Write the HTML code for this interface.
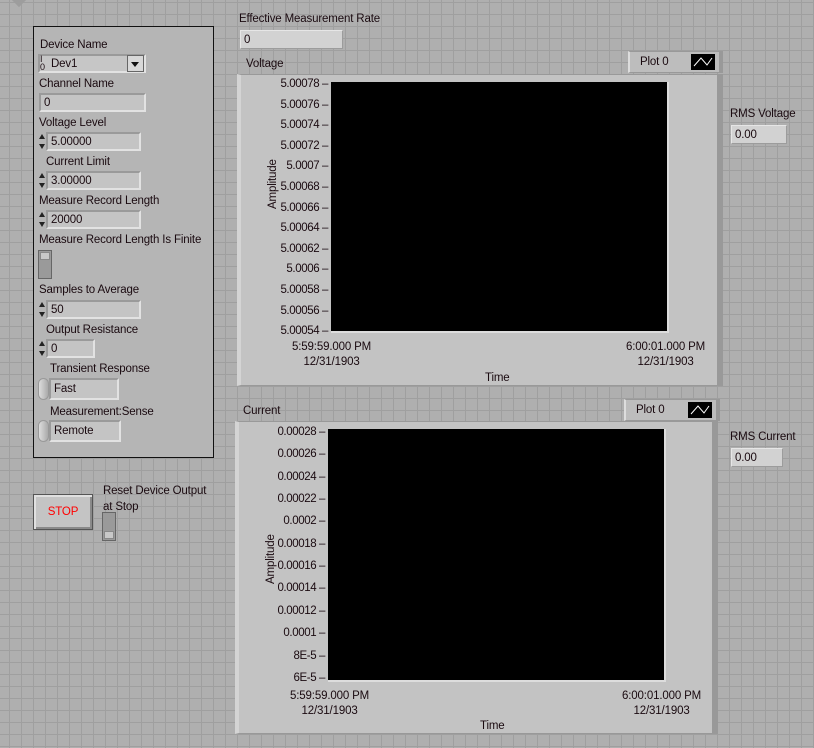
<!DOCTYPE html>
<html><head><style>
*{margin:0;padding:0;box-sizing:border-box}
body{width:814px;height:748px;overflow:hidden;position:relative;font-family:"Liberation Sans",sans-serif;font-size:11.5px;letter-spacing:-0.15px;color:#1a0a10;
background-color:#afafaf;
background-image:linear-gradient(to right,#9f9f9f 1px,transparent 1px),linear-gradient(to bottom,#9f9f9f 1px,transparent 1px);
background-size:12px 12px;background-position:9px 2px;}
.a{position:absolute;white-space:nowrap;margin-top:1px}
.panel{position:absolute;left:33px;top:26px;width:181px;height:432px;background:#b5b5b5;border:1px solid #111}
.num{position:absolute;height:19px;background:#c4c4c4;border:2px solid;border-color:#9a9a9a #e2e2e2 #e2e2e2 #9a9a9a;padding:1px 3px;line-height:14px}
.ind{position:absolute;height:19px;background:#d2d2d2;border:1px solid;border-color:#e6e6e6 #9c9c9c #9c9c9c #e6e6e6;padding:2px 3px;line-height:14px}
.spin{position:absolute;width:7px;height:19px}
.spin:before{content:"";position:absolute;left:1px;top:2px;border:3px solid transparent;border-bottom:5px solid #222;border-top:0}
.spin:after{content:"";position:absolute;left:1px;bottom:2px;border:3px solid transparent;border-top:5px solid #222;border-bottom:0}
.ring{position:absolute;width:11px;height:22px;border-radius:6px;background:linear-gradient(to right,#ddd,#aaa);border:1px solid #999}
.graph{position:absolute;background:#c3c3c3;border:1px solid #999;border-right:6px solid #999;border-left:4px solid #d4d4d4}
.plot{position:absolute;background:#000;border-right:2px solid #ddd;border-bottom:2px solid #ddd}
.yl{position:absolute;text-align:right;width:80px;letter-spacing:-0.4px;margin-top:1px}
.leg{position:absolute;height:22px;background:#bdbdbd;border:1px solid #999;border-right:4px solid #999;border-left:2px solid #ddd}
.leg span{position:absolute;top:4px;left:10px}
.leg i{position:absolute;right:4px;top:2px;width:24px;height:16px;background:#000}
.tog{position:absolute;background:#9a9a9a;border:1px solid #666}
</style></head><body>
<div class="a" style="left:14px;top:-6px;width:10px;height:10px;background:#9d9d9d;transform:rotate(45deg)"></div>

<div class="panel"></div>
<div class="a" style="left:40px;top:38px">Device Name</div>
<div class="num" style="left:38px;top:54px;width:108px;background:#c6c6c6;padding-left:11px">Dev1</div>
<div class="a" style="left:40px;top:54px;font-size:9px;line-height:8px">I<br>0</div>
<div class="a" style="left:127px;top:54px;width:17px;height:17px;background:#d8d8d8;border:1px solid #666"></div>
<div class="a" style="left:131px;top:61px;border:4px solid transparent;border-top:5px solid #111"></div>
<div class="a" style="left:39px;top:77px">Channel Name</div>
<div class="num" style="left:39px;top:93px;width:107px">0</div>
<div class="a" style="left:39px;top:116px">Voltage Level</div>
<div class="spin" style="left:38px;top:132px"></div><div class="num" style="left:46px;top:132px;width:95px">5.00000</div>
<div class="a" style="left:46px;top:155px">Current Limit</div>
<div class="spin" style="left:38px;top:171px"></div><div class="num" style="left:46px;top:171px;width:95px">3.00000</div>
<div class="a" style="left:39px;top:194px">Measure Record Length</div>
<div class="spin" style="left:38px;top:210px"></div><div class="num" style="left:46px;top:210px;width:95px">20000</div>
<div class="a" style="left:39px;top:233px">Measure Record Length Is Finite</div>
<div class="tog" style="left:38px;top:250px;width:14px;height:29px"><div style="position:absolute;left:1px;top:1px;width:10px;height:8px;background:#c8c8c8;border:1px solid #888"></div></div>
<div class="a" style="left:39px;top:283px">Samples to Average</div>
<div class="spin" style="left:38px;top:300px"></div><div class="num" style="left:46px;top:300px;width:95px">50</div>
<div class="a" style="left:46px;top:323px">Output Resistance</div>
<div class="spin" style="left:38px;top:339px"></div><div class="num" style="left:46px;top:339px;width:49px">0</div>
<div class="a" style="left:50px;top:362px">Transient Response</div>
<div class="ring" style="left:38px;top:378px"></div>
<div class="num" style="left:49px;top:378px;width:70px;height:22px;line-height:16px">Fast</div>
<div class="a" style="left:50px;top:405px">Measurement:Sense</div>
<div class="ring" style="left:38px;top:420px"></div>
<div class="num" style="left:49px;top:420px;width:72px;height:22px;line-height:16px">Remote</div>

<div class="a" style="left:33px;top:494px;width:60px;height:36px;background:#c4c4c4;border:1px solid #555;box-shadow:inset 2px 2px 0 #e0e0e0,inset -2px -2px 0 #8a8a8a;color:#f00;text-align:center;line-height:34px;margin-top:0">STOP</div>
<div class="a" style="left:103px;top:482px;line-height:16px">Reset Device Output<br>at Stop</div>
<div class="tog" style="left:102px;top:512px;width:14px;height:29px"><div style="position:absolute;left:1px;bottom:1px;width:10px;height:8px;background:#c8c8c8;border:1px solid #888"></div></div>

<div class="a" style="left:239px;top:12px">Effective Measurement Rate</div>
<div class="ind" style="left:240px;top:30px;width:103px">0</div>

<div class="a" style="left:246px;top:57px">Voltage</div>
<div class="leg" style="left:628px;top:51px;width:95px"><span>Plot 0</span><i><svg width="24" height="16"><path d="M3 12 L10 4 L16 11 L21 4" stroke="#fff" fill="none"/></svg></i></div>
<div class="graph" style="left:237px;top:74px;width:486px;height:312px"></div>
<div class="plot" style="left:331px;top:82px;width:338px;height:251px"></div>
<div class="a" style="left:267px;top:208px;transform:rotate(-90deg);transform-origin:left top">Amplitude</div>
<div class="a" style="left:292px;top:339px;text-align:center;line-height:15px">5:59:59.000 PM<br>12/31/1903</div>
<div class="a" style="left:626px;top:339px;text-align:center;line-height:15px">6:00:01.000 PM<br>12/31/1903</div>
<div class="a" style="left:485px;top:371px">Time</div>
<div class="a" style="left:730px;top:107px">RMS Voltage</div>
<div class="ind" style="left:731px;top:125px;width:56px">0.00</div>

<div class="a" style="left:243px;top:404px">Current</div>
<div class="leg" style="left:624px;top:399px;width:96px"><span>Plot 0</span><i><svg width="24" height="16"><path d="M3 12 L10 4 L16 11 L21 4" stroke="#fff" fill="none"/></svg></i></div>
<div class="graph" style="left:235px;top:421px;width:483px;height:313px"></div>
<div class="plot" style="left:328px;top:429px;width:338px;height:253px"></div>
<div class="a" style="left:265px;top:583px;transform:rotate(-90deg);transform-origin:left top">Amplitude</div>
<div class="a" style="left:290px;top:688px;text-align:center;line-height:15px">5:59:59.000 PM<br>12/31/1903</div>
<div class="a" style="left:622px;top:688px;text-align:center;line-height:15px">6:00:01.000 PM<br>12/31/1903</div>
<div class="a" style="left:480px;top:719px">Time</div>
<div class="a" style="left:730px;top:430px">RMS Current</div>
<div class="ind" style="left:731px;top:448px;width:52px">0.00</div>

<div class="yl" style="left:248px;top:77px">5.00078 –</div>
<div class="yl" style="left:248px;top:98px">5.00076 –</div>
<div class="yl" style="left:248px;top:118px">5.00074 –</div>
<div class="yl" style="left:248px;top:139px">5.00072 –</div>
<div class="yl" style="left:248px;top:159px">5.0007 –</div>
<div class="yl" style="left:248px;top:180px">5.00068 –</div>
<div class="yl" style="left:248px;top:201px">5.00066 –</div>
<div class="yl" style="left:248px;top:221px">5.00064 –</div>
<div class="yl" style="left:248px;top:242px">5.00062 –</div>
<div class="yl" style="left:248px;top:262px">5.0006 –</div>
<div class="yl" style="left:248px;top:283px">5.00058 –</div>
<div class="yl" style="left:248px;top:304px">5.00056 –</div>
<div class="yl" style="left:248px;top:324px">5.00054 –</div>

<div class="yl" style="left:245px;top:425px">0.00028 –</div>
<div class="yl" style="left:245px;top:447px">0.00026 –</div>
<div class="yl" style="left:245px;top:470px">0.00024 –</div>
<div class="yl" style="left:245px;top:492px">0.00022 –</div>
<div class="yl" style="left:245px;top:514px">0.0002 –</div>
<div class="yl" style="left:245px;top:537px">0.00018 –</div>
<div class="yl" style="left:245px;top:559px">0.00016 –</div>
<div class="yl" style="left:245px;top:581px">0.00014 –</div>
<div class="yl" style="left:245px;top:604px">0.00012 –</div>
<div class="yl" style="left:245px;top:626px">0.0001 –</div>
<div class="yl" style="left:245px;top:649px">8E-5 –</div>
<div class="yl" style="left:245px;top:671px">6E-5 –</div>
</body></html>
